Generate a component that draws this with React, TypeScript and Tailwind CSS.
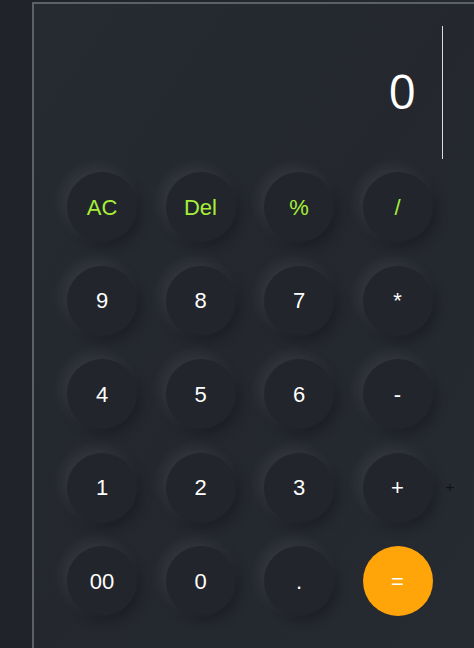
const keys: { label: string; kind: 'op' | 'num' | 'eq' }[] = [
  { label: 'AC', kind: 'op' },
  { label: 'Del', kind: 'op' },
  { label: '%', kind: 'op' },
  { label: '/', kind: 'op' },
  { label: '9', kind: 'num' },
  { label: '8', kind: 'num' },
  { label: '7', kind: 'num' },
  { label: '*', kind: 'num' },
  { label: '4', kind: 'num' },
  { label: '5', kind: 'num' },
  { label: '6', kind: 'num' },
  { label: '-', kind: 'num' },
  { label: '1', kind: 'num' },
  { label: '2', kind: 'num' },
  { label: '3', kind: 'num' },
  { label: '+', kind: 'num' },
  { label: '00', kind: 'num' },
  { label: '0', kind: 'num' },
  { label: '.', kind: 'num' },
  { label: '=', kind: 'eq' },
]

function Key({ label, kind }: { label: string; kind: 'op' | 'num' | 'eq' }) {
  const base = 'flex h-[70px] w-[70px] items-center justify-center rounded-full text-[22px]'
  if (kind === 'eq') {
    return (
      <button type="button" className={`${base} bg-[#ffa50a] text-white`}>
        {label}
      </button>
    )
  }
  return (
    <button
      type="button"
      className={`${base} bg-[#22252b] shadow-[-5px_-5px_14px_rgba(255,255,255,0.08),4px_5px_12px_rgba(0,0,0,0.25)] ${
        kind === 'op' ? 'text-[#a6ef3a]' : 'text-white'
      }`}
    >
      {label}
    </button>
  )
}

export default function App() {
  return (
    <div
      className="flex min-h-[648px] w-[474px] overflow-hidden bg-gradient-to-r from-[#202329] to-[#262a30]"
      style={{ fontFamily: '"Liberation Sans", Arial, sans-serif' }}
    >
      <div className="ml-[32px] mt-[2px] flex min-h-[646px] flex-1 flex-col border-l-2 border-t-2 border-[#5c6068] bg-gradient-to-br from-[#262a31] via-[#24272e] to-[#262a31]">
        <div className="mt-[22px] flex h-[133px] w-[409px] items-center justify-end border-r border-[#d8dbe0] pr-[26px] pb-[3px]">
          <span
            className="text-[48px] leading-none text-white"
            style={{ fontFamily: '"Open Sans", "Liberation Sans", sans-serif' }}
          >
            0
          </span>
        </div>
        <div className="mt-[13px] ml-[33px] grid grid-cols-[repeat(4,70px)] gap-x-[28.5px] gap-y-[23.5px]">
          {keys.map((k) => (
            <div key={k.label} className="relative">
              <Key label={k.label} kind={k.kind} />
              {k.label === '+' && (
                <span className="absolute left-[83px] top-[26px] text-[15px] leading-none text-[#111318]">+</span>
              )}
            </div>
          ))}
        </div>
      </div>
    </div>
  )
}
